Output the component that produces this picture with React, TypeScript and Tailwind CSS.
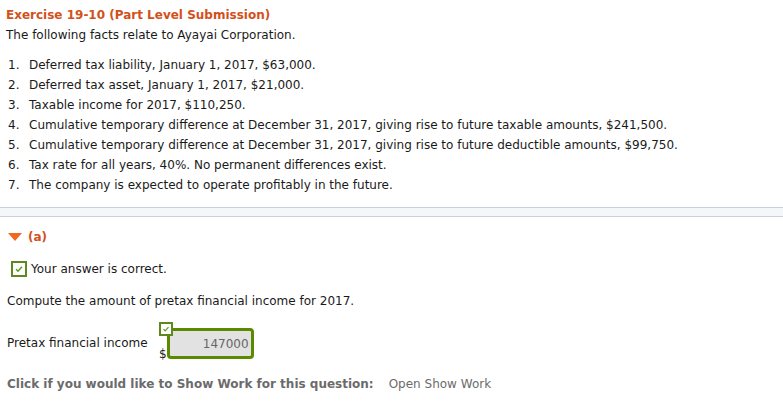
import React from "react";

const facts = [
  "Deferred tax liability, January 1, 2017, $63,000.",
  "Deferred tax asset, January 1, 2017, $21,000.",
  "Taxable income for 2017, $110,250.",
  "Cumulative temporary difference at December 31, 2017, giving rise to future taxable amounts, $241,500.",
  "Cumulative temporary difference at December 31, 2017, giving rise to future deductible amounts, $99,750.",
  "Tax rate for all years, 40%. No permanent differences exist.",
  "The company is expected to operate profitably in the future.",
];

function Check({ className }: { className: string }) {
  return (
    <svg viewBox="0 0 12 12" className={className}>
      <path d="M3 6.2 L5 8.2 L9 3.8" fill="none" stroke="#5e9a1c" strokeWidth="1.5" />
    </svg>
  );
}

export default function App() {
  return (
    <div className="w-[783px] h-[404px] overflow-hidden bg-white text-[12px] text-[#1a1a1a] font-['DejaVu_Sans',Verdana,sans-serif] leading-[20px]">
      {/* Header */}
      <div className="px-[6px] pt-[5px]">
        <h1 className="text-[12px] font-bold text-[#d4501a]">Exercise 19-10 (Part Level Submission)</h1>
        <p>The following facts relate to Ayayai Corporation.</p>

        <ol className="mt-[10px] pl-[2px]">
          {facts.map((f, i) => (
            <li key={i} className="flex">
              <span className="w-[21px] shrink-0">{i + 1}.</span>
              <span>{f}</span>
            </li>
          ))}
        </ol>
      </div>

      {/* Divider band */}
      <div className="mt-[12px] h-[10px] bg-[#f4f7fa] border-y border-[#c9d2dc]" />

      {/* Part (a) */}
      <div className="px-[7px] pt-[10px]">
        <div className="flex items-center gap-[6px] font-bold text-[#d4501a]">
          <svg viewBox="0 0 14 8" className="w-[14px] h-[8px] ml-[1px]">
            <path d="M0 0 H14 L7 8 Z" fill="#f26722" />
          </svg>
          <span>(a)</span>
        </div>

        <div className="flex items-center gap-[4px] mt-[12px] ml-[4px]">
          <span className="w-[16px] h-[16px] border-2 border-[#5c8a1e] flex items-center justify-center">
            <Check className="w-[12px] h-[12px]" />
          </span>
          <span>Your answer is correct.</span>
        </div>

        <p className="mt-[12px]">Compute the amount of pretax financial income for 2017.</p>

        <div className="flex items-end mt-[11px]">
          <span className="w-[152px] mb-[6px]">Pretax financial income</span>
          <div className="relative flex items-end pt-[6px]">
            <span className="leading-[14px] -mb-[2px]">$</span>
            <div className="w-[87px] h-[31px] bg-[#e2e2e2] border-[3px] border-[#5a8a00] rounded-[4px] flex items-center justify-end pr-[2px] text-[#666]">
              147000
            </div>
            <span className="absolute left-0 top-0 w-[14px] h-[14px] bg-white border-2 border-[#5c8a1e] flex items-center justify-center">
              <Check className="w-[10px] h-[10px]" />
            </span>
          </div>
        </div>

        <div className="flex mt-[15px] text-[#6b6b6b]">
          <span className="font-bold">Click if you would like to Show Work for this question:</span>
          <span className="ml-[15px]">Open Show Work</span>
        </div>
      </div>
    </div>
  );
}
